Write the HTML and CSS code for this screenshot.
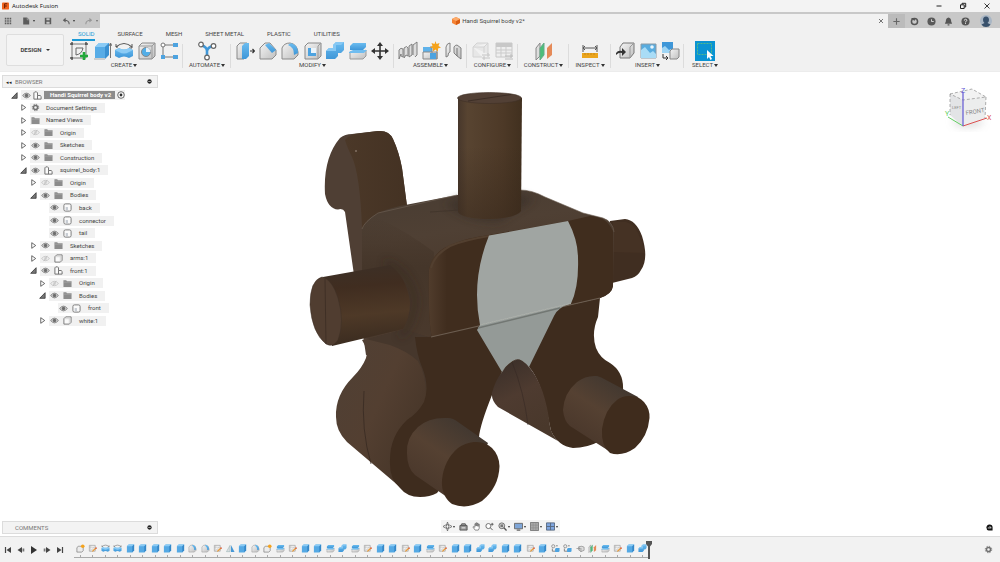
FILE: index.html
```html
<!DOCTYPE html>
<html lang="en">
<head>
<meta charset="utf-8">
<title>Autodesk Fusion</title>
<link rel="stylesheet" href="styles.css">
</head>
<body>
<svg class="defs" aria-hidden="true">
  <defs>
    <linearGradient id="blue" x1="0" y1="0" x2="0" y2="1"><stop offset="0" stop-color="#6bbcf0"/><stop offset="1" stop-color="#3f97d8"/></linearGradient>
    <linearGradient id="grey" x1="0" y1="0" x2="1" y2="1"><stop offset="0" stop-color="#f4f4f4"/><stop offset="1" stop-color="#bfbfbf"/></linearGradient>
  </defs>
  <symbol id="i-sketch" viewBox="0 0 20 20"><path d="M3 3h14v14H3z" fill="none" stroke="#777"/><path d="M1 3h3M3 1v3M16 3h3M17 1v3M1 17h3M3 16v3" stroke="#555" stroke-width="1.500"/><path d="M7 14V7h7q-1 6-7 7z" fill="none" stroke="#666"/><path d="M15 11v8M11 15h8" stroke="#22a83a" stroke-width="2.600"/></symbol>
  <symbol id="i-extrude" viewBox="0 0 20 20"><path d="M3 6l4-4h10v11l-4 4H3z" fill="#58ace6"/><path d="M3 6l4-4h10l-4 4z" fill="#8bcbf5"/><path d="M13 6l4-4v12l-4 4z" fill="#3a91d2"/><path d="M2 18h11" stroke="#aaa"/><path d="M18.500 17V3M17 5l1.500-3L20 5" stroke="#555" stroke-width=".8" fill="none"/></symbol>
  <symbol id="i-textrude" viewBox="0 0 20 20"><path d="M2 5l4-4h12v13l-4 5H2z" fill="#55a9e4"/><path d="M2 5l4-4h12l-4 4z" fill="#8bcbf5"/><path d="M14 5l4-4v13l-4 5z" fill="#3487c8"/></symbol>
  <symbol id="i-revolve" viewBox="0 0 20 20"><path d="M2 6Q10-1 18 6" fill="none" stroke="#555" stroke-width="1.100"/><path d="M18 3v4h-3M2 3v3h2" fill="none" stroke="#555"/><path d="M1 9l4-2q5 3 10 0l4 2v6l-4 2q-5-3-10 0l-4-2z" fill="url(#blue)"/><path d="M1 9l4-2q5 3 10 0l4 2-4 2q-5 3-10 0z" fill="#8bcbf5"/></symbol>
  <symbol id="i-hole" viewBox="0 0 20 20"><path d="M2 5l3-3h13v13l-3 3H2z" fill="url(#grey)" stroke="#888"/><path d="M2 5h13v13M15 5l3-3" fill="none" stroke="#999"/><circle cx="9" cy="11" r="4.500" fill="#52aee8" stroke="#888"/><path d="M9 6.500a4.500 4.500 0 0 1 4.500 4.500H9z" fill="#e5f1fa"/></symbol>
  <symbol id="i-pattern" viewBox="0 0 20 20"><path d="M4 4h12M4 4v12h12" fill="none" stroke="#777"/><circle cx="4" cy="4" r="2" fill="#fff" stroke="#777"/><path d="M14 2h5v4h-5zM2 14h4v4H2zM14 14h5v4h-5z" fill="#4da3e0"/></symbol>
  <symbol id="i-automate" viewBox="0 0 20 20"><path d="M4 4q6 2 6 6v6M10 10q1-4 6-5" fill="none" stroke="#3f97d8" stroke-width="2.600"/><g fill="#fff" stroke="#666" stroke-width="1.200"><circle cx="4" cy="3.500" r="2.300"/><circle cx="16.500" cy="5" r="2.300"/><circle cx="10" cy="16.500" r="2.300"/></g></symbol>
  <symbol id="i-press" viewBox="0 0 20 20"><path d="M2 5l3-3h7v13l-3 3H2z" fill="url(#grey)" stroke="#888"/><path d="M7 5l3-3h4v13l-3 3H7z" fill="url(#blue)"/><path d="M15 10h4M17.500 8l2 2-2 2" fill="none" stroke="#333" stroke-width="1.200"/></symbol>
  <symbol id="i-fillet" viewBox="0 0 20 20"><path d="M2 18V7q2-5 8-5 7 1 8 9v3l-4 4z" fill="url(#grey)" stroke="#8a8a8a"/><path d="M8 4q3-3 5-1 5 2 5 9l-4 2Q14 6 8 4z" fill="url(#blue)"/></symbol>
  <symbol id="i-chamfer" viewBox="0 0 20 20"><path d="M2 18V7l5-5h5l6 7v5l-4 4z" fill="url(#grey)" stroke="#8a8a8a"/><path d="M7 4l4-2 7 7-4 3z" fill="url(#blue)"/></symbol>
  <symbol id="i-shell" viewBox="0 0 20 20"><path d="M2 5l3-3h13v13l-3 3H2z" fill="url(#grey)" stroke="#888"/><path d="M5 7h8v8H5z" fill="#4da3e0"/><path d="M8 7h5v5H8z" fill="#eaf4fb"/><path d="M15 5v13M15 5l3-3" stroke="#999"/></symbol>
  <symbol id="i-combine" viewBox="0 0 20 20"><path d="M1 10l3-3h4V4l3-3h8v8l-3 3h-3v3l-3 3H1z" fill="url(#blue)"/><path d="M1 10l3-3h4V4l3-3h8l-3 3h-5v6z" fill="#86c8f4"/></symbol>
  <symbol id="i-split" viewBox="0 0 20 20"><path d="M2 11h13l3-2v6l-3 3H2z" fill="url(#grey)" stroke="#999"/><path d="M2 5l3-3h13v4l-3 3H2z" fill="url(#blue)"/><path d="M1 11l4-2h14l-3 3H1z" fill="#70bdf0"/></symbol>
  <symbol id="i-move" viewBox="0 0 20 20"><path d="M10 4v12M4 10h12" stroke="#333" stroke-width="1.600"/><path d="M10 1l3 4H7zM10 19l3-4H7zM1 10l4-3v6zM19 10l-4-3v6z" fill="#333"/></symbol>
  <symbol id="i-joints" viewBox="0 0 20 20"><path d="M1 18V9q2-3 4-1v8l-2-1v-2zM6 17V7q3-3 4 0v8l-2-1zM11 16V5l3-2v11zM15 14V4l4-3v13l-2 2" fill="#ddd" stroke="#777" stroke-width=".9"/></symbol>
  <symbol id="i-newcomp" viewBox="0 0 20 20"><path d="M2 6h9v5H2z" fill="#5fb2ea"/><path d="M2 11h14v7H2z" fill="url(#grey)" stroke="#888"/><path d="M9 6h2v12M16 8v10" stroke="#888" fill="none"/><path d="M9 12h6v6H9z" fill="#4da3e0"/><path d="M14.500 0l1 3 3-1-1 3 2.500 1.500-3 1v3l-2.500-2-2.500 2V7l-3-.5L11.500 5l-1-3 3 1z" fill="#f5a31c"/></symbol>
  <symbol id="i-joint" viewBox="0 0 20 20"><path d="M3 16V6q1-4 4-4v9q-2 0-2 4zM11 6q1-2 3-2l4 3v11l-4-3-3-3z" fill="url(#grey)" stroke="#777" stroke-width=".9"/><path d="M14 7v8" stroke="#777"/></symbol>
  <symbol id="i-config" viewBox="0 0 20 20"><path d="M2 6l4-4h11v11M2 6h11l4-4M2 6v10h9M13 6v6" fill="#e7e7e7" stroke="#d3d3d3"/><path d="M11 14h8M11 17h8M17 12v4M13 15v4" stroke="#c4c4c4"/></symbol>
  <symbol id="i-table" viewBox="0 0 20 20"><path d="M2 2h16v14H2z" fill="#eee" stroke="#c8c8c8"/><path d="M2 2h16v4H2z" fill="#c8c8c8"/><path d="M2 9h16M2 12h16M7 6v10M12 6v10" stroke="#cbcbcb"/><path d="M11 15h8M11 18h8M17 13v4" stroke="#bbb"/></symbol>
  <symbol id="i-planes" viewBox="0 0 20 20"><path d="M2 7l4-5v13l-4 4z" fill="#ddd" stroke="#888"/><path d="M6 7l4-5v12l-4 5z" fill="#4bbf7a" stroke="#6a8"/><path d="M13 7l5-5v12l-5 4z" fill="#e58a58"/></symbol>
  <symbol id="i-measure" viewBox="0 0 20 20"><path d="M3 4v7M17 4v7M3 7h14M5 5L3 7l2 2M15 5l2 2-2 2" fill="none" stroke="#555"/><path d="M2 12h16v5H2z" fill="#eba51d"/><path d="M5 12v2M8 12v2M11 12v2M14 12v2" stroke="#c58618"/></symbol>
  <symbol id="i-insert" viewBox="0 0 20 20"><path d="M5 6l3-4h11v10l-4 5H5z" fill="url(#grey)" stroke="#777"/><path d="M15 6v11M15 6l4-4" stroke="#999"/><path d="M1 12q2-3 6-2V7l4 4-4 4v-3q-3-1-6 2z" fill="#333"/></symbol>
  <symbol id="i-image" viewBox="0 0 20 20"><path d="M3 3h15v14H3z" fill="#58acdf" stroke="#8b9aa5"/><path d="M3 16V9l4-3 5 6 3-2 3 3v4H3z" fill="#a9dcf6"/><circle cx="14" cy="6" r="1.800" fill="#e8f7ff"/></symbol>
  <symbol id="i-derive" viewBox="0 0 20 20"><path d="M2 1h11v11H2z" fill="#3f97d8"/><path d="M2 11V7l3-2 4 4 2-1 2 3v1H2z" fill="#9fd5f4"/><path d="M10 10l2-2h7v8l-2 2h-7z" fill="url(#grey)" stroke="#888"/><path d="M3 13v4h5M6 15l2 2-2 2" fill="none" stroke="#333"/></symbol>
  <symbol id="i-select" viewBox="0 0 20 20"><path d="M0 0h20v20H0z" fill="#0a93d2"/><path d="M2.500 2.500h14v11h-14z" fill="none" stroke="#52b88a" stroke-dasharray="2 1"/><path d="M12 9v9l2-2 1.500 3 1.500-1-1.500-3h3z" fill="#fff"/></symbol>
  <symbol id="i-tsketch" viewBox="0 0 20 20"><path d="M3 3h13v13H3z" fill="#f8f8f8" stroke="#9a9a9a" stroke-width="1.500"/><path d="M6 3v13M3 7h13M7 13q5 0 5-6" fill="none" stroke="#aaa"/><path d="M9 18l1-4 7-6 2 2-7 6z" fill="#e79a3a"/><path d="M16 9l2-2 2 2-2 2z" fill="#d4463c"/></symbol>
  <symbol id="i-tnew" viewBox="0 0 20 20"><path d="M2 8q3-4 6-3h8v10l-3 3H2z" fill="#ececec" stroke="#777" stroke-width="1.500"/><circle cx="15" cy="5" r="4" fill="#f5a31c"/></symbol>
  <symbol id="i-mirror" viewBox="0 0 20 20"><path d="M9 3v14H1z" fill="#d9dde0" stroke="#8aa"/><path d="M11 2l8 16h-8z" fill="#4798d6"/></symbol>
  <symbol id="i-link" viewBox="0 0 20 20"><circle cx="5" cy="5" r="3.500" fill="#eee" stroke="#777" stroke-width="1.500"/><path d="M3 10v6h6M11 4h4" fill="none" stroke="#555" stroke-width="1.500"/><path d="M9 11l2-2h8v7l-2 2H9z" fill="#4da3e0"/></symbol>
  <symbol id="i-rigid" viewBox="0 0 20 20"><path d="M6 6v7l5 4 7-3V7l-5-2z" fill="#ddd" stroke="#888" stroke-width="1.500"/><path d="M1 10h8M6 7l3 3-3 3M11 9v8" fill="none" stroke="#888" stroke-width="1.500"/></symbol>

  <symbol id="i-eye" viewBox="0 0 10 8"><path d="M.5 4Q5-1.500 9.500 4 5 9.500.5 4z" fill="#c9c9c9" stroke="#858585"/><circle cx="5" cy="4" r="1.900" fill="#6c6c6c"/></symbol>
  <symbol id="i-eyeoff" viewBox="0 0 10 8"><path d="M.5 4Q5-1 9.500 4 5 9 .5 4zM3 7l4-6" fill="none" stroke="#b9b9b9" stroke-width=".8"/><circle cx="5" cy="4" r="1.300" fill="none" stroke="#bbb" stroke-width=".7"/></symbol>
  <symbol id="i-folder" viewBox="0 0 10 10"><path d="M.5 1.500h3l1 1h5v6.500h-9z" fill="#8c8c8c"/><path d="M.5 3.500h9" stroke="#b5b5b5" stroke-width=".6"/></symbol>
  <symbol id="i-body" viewBox="0 0 10 10"><rect x="1" y="1" width="8" height="8" rx="1.800" fill="#fafafa" stroke="#737373"/><path d="M3 4.500h2.500V8H3z" fill="#c6cbd2"/></symbol>
  <symbol id="i-cube" viewBox="0 0 10 10"><path d="M1 3l2-2h6v6L7 9H1z" fill="#fafafa" stroke="#737373" stroke-linejoin="round"/><path d="M1.500 3H7v5.500M7 3l1.500-1.500" fill="none" stroke="#bbb" stroke-width=".6"/></symbol>
  <symbol id="i-part" viewBox="0 0 10 10"><path d="M1 9V2l1-1h2l1 1v3h3l1 1v3zM5 5v4" fill="#fafafa" stroke="#666" stroke-linejoin="round"/></symbol>
  <symbol id="i-gear" viewBox="0 0 10 10"><circle cx="5" cy="5" r="2.300" fill="none" stroke="#707070" stroke-width="1.700"/><circle cx="5" cy="5" r="3.600" fill="none" stroke="#707070" stroke-width="1" stroke-dasharray="1.500 1.327"/></symbol>
  <symbol id="i-open" viewBox="0 0 8 8"><path d="M7 .8V7.200H.8z" fill="#777" stroke="#333" stroke-width=".9"/></symbol>
  <symbol id="i-closed" viewBox="0 0 8 8"><path d="M2 .8L6.500 4 2 7.200z" fill="#fff" stroke="#444" stroke-width=".9"/></symbol>
  <symbol id="i-dot" viewBox="0 0 6 6"><circle cx="3" cy="3" r="2.600" fill="#222"/><path d="M1.500 3h3" stroke="#ddd" stroke-width=".8"/></symbol>
</svg>

<header class="titlebar">
  <svg class="logo" viewBox="0 0 8 8"><rect width="8" height="8" rx="1" fill="#f0641e"/><path d="M3 1.500v5M3 1.500h3M3 4h2.500" stroke="#6b1d00" stroke-width="1.200"/></svg>
  <h1 class="app-name">Autodesk Fusion</h1>
  <div class="window-buttons">
    <button aria-label="Minimize"><svg viewBox="0 0 8 8"><path d="M1.500 4h5" stroke="#222"/></svg></button>
    <button aria-label="Restore"><svg viewBox="0 0 8 8"><path d="M1.500 2.800h3.700v3.700H1.500zM3 2.500V1.300h3.700V5H5.500" fill="none" stroke="#222"/></svg></button>
    <button aria-label="Close"><svg viewBox="0 0 8 8"><path d="M1.500 1.500l5 5M6.500 1.500l-5 5" stroke="#222" stroke-width=".9"/></svg></button>
  </div>
</header>

<div class="docbar">
  <div class="quick">
    <button aria-label="Data panel"><svg viewBox="0 0 10 10"><path d="M1 1h2v2H1zM4 1h2v2H4zM7 1h2v2H7zM1 4h2v2H1zM4 4h2v2H4zM7 4h2v2H7zM1 7h2v2H1zM4 7h2v2H4zM7 7h2v2H7z" fill="#5c5c5c"/></svg></button>
    <button class="wide" aria-label="File"><svg viewBox="0 0 10 10"><path d="M1.500.5h5l2.500 3v6H1.500z" fill="#5c5c5c"/><path d="M6.500.5v3H9" stroke="#ccc" stroke-width=".6" fill="none"/></svg><i class="caret"></i></button>
    <button aria-label="Save"><svg viewBox="0 0 10 10"><path d="M1 1h8v8H1z" fill="#5c5c5c"/><path d="M3 1.500h4V4H3zM3 6h4v2.500H3z" fill="#c8c8c8"/></svg></button>
    <button class="wide" aria-label="Undo"><svg viewBox="0 0 10 10"><path d="M9 9q0-5-6-5" fill="none" stroke="#5c5c5c" stroke-width="1.300"/><path d="M4.500 1L1 4l3.500 3z" fill="#5c5c5c"/></svg><i class="caret"></i></button>
    <button class="wide faded" aria-label="Redo"><svg viewBox="0 0 10 10"><path d="M1 9q0-5 6-5" fill="none" stroke="#777" stroke-width="1.300"/><path d="M5.500 1L9 4 5.500 7z" fill="#777"/></svg><i class="caret"></i></button>
  </div>
  <div class="doctab">
    <span class="doctitle"><svg viewBox="0 0 8 8"><path d="M4 0l4 2v4L4 8 0 6V2z" fill="#f58233"/><path d="M4 4l4-2v4L4 8z" fill="#d95d12"/><path d="M4 0l4 2-4 2-4-2z" fill="#fbab6c"/></svg>Handi Squirrel body v2*</span>
    <button aria-label="Close document"><svg viewBox="0 0 8 8"><path d="M2 2l4 4M6 2L2 6" stroke="#555" stroke-width=".8"/></svg></button>
  </div>
  <div class="account">
    <button class="add" aria-label="New tab"><svg viewBox="0 0 10 10"><path d="M5 1.500v7M1.500 5h7" stroke="#666" stroke-width="1.200"/></svg></button>
    <button aria-label="Extensions"><svg viewBox="0 0 10 10"><circle cx="5" cy="5" r="3.400" fill="none" stroke="#555" stroke-width="1.700"/><path d="M1 1l4 3.500L6 1z" fill="#555"/></svg></button>
    <button aria-label="Job status"><svg viewBox="0 0 10 10"><circle cx="5" cy="5" r="4.500" fill="#5a5a5a"/><path d="M5 2.500V5h2.500" fill="none" stroke="#ddd"/></svg></button>
    <button aria-label="Notifications"><svg viewBox="0 0 10 10"><path d="M5 .5Q8 1 8 5l1 2.500H1L2 5Q2 1 5 .5zM4 8h2v1.500H4z" fill="#555"/></svg></button>
    <button aria-label="Help"><svg viewBox="0 0 10 10"><circle cx="5" cy="5" r="4.500" fill="#555"/><path d="M3.700 4q0-1.500 1.400-1.500T6.400 4Q6.400 4.700 5 5.300V6M5 6.800v1" fill="none" stroke="#eee"/></svg></button>
    <button class="avatar" aria-label="Profile"><svg viewBox="0 0 12 12"><circle cx="6" cy="6" r="6" fill="#a9b6c4"/><path d="M3 5Q3 1.500 6 1.500T9 5Q9 7 7.500 8l3 1.500Q9 12 6 12T1.500 9.500l3-1.500Q3 7 3 5z" fill="#38506b"/></svg></button>
  </div>
</div>

<section class="ribbon">
  <button class="workspace">DESIGN<i class="caret"></i></button>
  <div class="ribbon-main">
    <nav class="tabs">
      <button class="tab active">SOLID</button>
      <button class="tab">SURFACE</button>
      <button class="tab">MESH</button>
      <button class="tab">SHEET METAL</button>
      <button class="tab">PLASTIC</button>
      <button class="tab">UTILITIES</button>
    </nav>
    <div class="groups">
      <div class="group g-create"><div class="tools">
        <button aria-label="Create sketch"><svg><use href="#i-sketch"/></svg></button><button aria-label="Extrude"><svg><use href="#i-extrude"/></svg></button><button aria-label="Revolve"><svg><use href="#i-revolve"/></svg></button><button aria-label="Hole"><svg><use href="#i-hole"/></svg></button><button aria-label="Pattern"><svg><use href="#i-pattern"/></svg></button></div>
        <button class="menu">CREATE<i class="caret"></i></button></div>
      <div class="group g-automate"><div class="tools"><button aria-label="Automated modeling"><svg><use href="#i-automate"/></svg></button></div><button class="menu">AUTOMATE<i class="caret"></i></button></div>
      <div class="group g-modify"><div class="tools">
        <button aria-label="Press pull"><svg><use href="#i-press"/></svg></button><button aria-label="Chamfer"><svg><use href="#i-chamfer"/></svg></button><button aria-label="Fillet"><svg><use href="#i-fillet"/></svg></button><button aria-label="Shell"><svg><use href="#i-shell"/></svg></button><button aria-label="Combine"><svg><use href="#i-combine"/></svg></button><button aria-label="Split body"><svg><use href="#i-split"/></svg></button><button aria-label="Move"><svg><use href="#i-move"/></svg></button></div>
        <button class="menu">MODIFY<i class="caret"></i></button></div>
      <div class="group g-three"><div class="tools"><button aria-label="Joint origins"><svg><use href="#i-joints"/></svg></button><button aria-label="New component"><svg><use href="#i-newcomp"/></svg></button><button aria-label="Joint"><svg><use href="#i-joint"/></svg></button></div><button class="menu">ASSEMBLE<i class="caret"></i></button></div>
      <div class="group g-two"><div class="tools"><button aria-label="Configure"><svg><use href="#i-config"/></svg></button><button aria-label="Configuration table"><svg><use href="#i-table"/></svg></button></div><button class="menu">CONFIGURE<i class="caret"></i></button></div>
      <div class="group g-two"><div class="tools"><button aria-label="Offset plane"><svg><use href="#i-planes"/></svg></button></div><button class="menu">CONSTRUCT<i class="caret"></i></button></div>
      <div class="group g-one"><div class="tools"><button aria-label="Measure"><svg><use href="#i-measure"/></svg></button></div><button class="menu">INSPECT<i class="caret"></i></button></div>
      <div class="group g-three"><div class="tools"><button aria-label="Insert derive"><svg><use href="#i-insert"/></svg></button><button aria-label="Decal"><svg><use href="#i-image"/></svg></button><button aria-label="Canvas"><svg><use href="#i-derive"/></svg></button></div><button class="menu">INSERT<i class="caret"></i></button></div>
      <div class="group g-one last"><div class="tools"><button aria-label="Select"><svg><use href="#i-select"/></svg></button></div><button class="menu">SELECT<i class="caret"></i></button></div>
    </div>
  </div>
</section>

<main class="viewport">
  <svg class="scene" viewBox="0 72 1000 464" role="img" aria-label="Squirrel body model">
    <defs>
      <linearGradient id="neck" x1="0" x2="1"><stop offset="0" stop-color="#47372b"/><stop offset=".15" stop-color="#584431"/><stop offset=".7" stop-color="#4d3927"/><stop offset="1" stop-color="#41301f"/></linearGradient>
      <linearGradient id="neckshade" x1="0" x2="0" y1="0" y2="1"><stop offset=".4" stop-color="#36271b" stop-opacity="0"/><stop offset="1" stop-color="#36271b" stop-opacity=".5"/></linearGradient>
      <linearGradient id="top" x1="0" x2=".3" y1="0" y2="1"><stop offset="0" stop-color="#483c32"/><stop offset=".35" stop-color="#4f4034"/><stop offset=".7" stop-color="#4a392c"/><stop offset="1" stop-color="#43301f"/></linearGradient>
      <linearGradient id="side" x1="0" x2="0" y1="0" y2="1"><stop offset="0" stop-color="#45362a" stop-opacity="0"/><stop offset=".35" stop-color="#45362a"/><stop offset="1" stop-color="#4b3a2d"/></linearGradient>
      <linearGradient id="leg" x1="0" x2="1" y1="0" y2=".7"><stop offset="0" stop-color="#4f4035"/><stop offset=".5" stop-color="#533f31"/><stop offset="1" stop-color="#433326"/></linearGradient>
      <linearGradient id="peg" x1=".25" x2=".75" y1=".9" y2=".1"><stop offset="0" stop-color="#48362a"/><stop offset=".55" stop-color="#554132"/><stop offset="1" stop-color="#423830"/></linearGradient>
      <linearGradient id="arm" x1="0" x2=".1" y1="0" y2="1"><stop offset="0" stop-color="#3c3027"/><stop offset=".3" stop-color="#402d20"/><stop offset=".65" stop-color="#4e3927"/><stop offset="1" stop-color="#3b2c20"/></linearGradient>
      <linearGradient id="inner" x1="0" x2=".4" y1="0" y2="1"><stop offset="0" stop-color="#372d28"/><stop offset=".5" stop-color="#4e3b30"/><stop offset="1" stop-color="#49382b"/></linearGradient>
      <linearGradient id="tailface" x1="0" x2="1"><stop offset="0" stop-color="#4b3828"/><stop offset="1" stop-color="#443223"/></linearGradient>
      <linearGradient id="edge" x1="0" x2="1"><stop offset="0" stop-color="#503c2c"/><stop offset="1" stop-color="#402d1e"/></linearGradient>
      <filter id="soft" x="-50%" y="-50%" width="200%" height="200%"><feGaussianBlur stdDeviation="4"/></filter>
    </defs>
    <path d="M366 355L353 268 345 212Q343 208 338 209.500 328 209 325 194 323 158 340 138 345 134 352 134L378 131Q389 130 393 139 399 152 402 168L407 206 420 350z" fill="#4f3f34"/>
    <path d="M345 140Q350 134 358 133.500L378 131Q389 130 393 139 399 152 402 168L407 206 362 228Q360 175 352 157 347 147 345 140z" fill="url(#tailface)"/>
    <circle cx="356" cy="151" r=".8" fill="#aa9c90"/>
    <path d="M610 221L625 219Q636 220 642 236 649 259 641 270 638 276 632 278L608 284z" fill="#402e21"/>
    <path d="M613 222h13q8 2 12 11 5 10 7 20l-32-1z" fill="#453224"/>
    <path d="M362 232Q362 222 378 213 384 210 400 206L457 195 520 190Q532 190 545 197L583 213 603 218Q613 221 614 232L613 286Q612 294 600 298L429 337 415 335 362 300z" fill="url(#top)"/>
    <path d="M470 194Q500 188 535 199L500 222Q470 224 445 204z" fill="#2f2720" opacity=".45" filter="url(#soft)"/>
    <path d="M430 212L520 206" stroke="#3c3029" stroke-width=".6"/>
    <path d="M362 229Q366 220 376 217 408 232 434 252L432 337 415 362 362 335z" fill="url(#side)"/>
    <path d="M362 340Q369 351 366 358 362 368 353 377 335 395 336 417 336 431 347 442L400 487Q420 485 438 440L432 337 402 329z" fill="url(#leg)"/>
    <path d="M366 339L404 329 430 337 426 395Q426 374 418 361 407 351 390 345z" fill="#46372c"/>
    <path d="M364 391Q361 430 371 464" fill="none" stroke="#33271f" stroke-width=".7"/>
    <path d="M429 337L600 298 598 317Q591 333 596 348 600 358 610 363 624 372 623 390L600 441Q587 448 573 448 558 446 551 431L548 417Q541 380 529 367L517 359 502 372 492 395Q480 425 479 437L437 493Q430 497 420 497 407 497 400 488 389 479 390 460 390 436 407 420 418 413 424 402 430 387 422 367 417 355 415 337z" fill="#3e2c1e"/>
    <path d="M517 359Q507 365 502 372 495 381 492 393 491 400 498 407L558 441Q551 434 550 426 545 385 529 367 523 360 517 359z" fill="url(#inner)"/>
    <path d="M512 362Q524 392 528 425" fill="none" stroke="#352923" stroke-width=".6"/>
    <path d="M432 337Q428 322 429 270 432 252 453 244 467 238 489 235L568 221 590 216Q606 216 613 231L613 286Q612 294 600 298z" fill="#402d1e"/>
    <path d="M432 337Q428 322 429 270 432 254 446 247L447 333z" fill="url(#edge)"/>
    <path d="M431 268Q435 254 450 246 464 240 489 236" fill="none" stroke="#523f2f" stroke-width="2"/>
    <path d="M431 337L600 298" stroke="#6b5d50" stroke-width="1.200"/>
    <path d="M362 229Q364 222 378 213L457 195M520 190Q532 190 545 197L583 213 603 218Q613 222 614 232" fill="none" stroke="#6f6256" stroke-width=".6"/>
    <path d="M489 235.500L568 221Q578 240 578 258 579 287 571 303.500L480 325Q471 280 489 235.500z" fill="#a0a5a2"/>
    <path d="M480 325L571 303.500Q558 307 554 316L529 367Q522 359 517 359 508 362 502 372L477 330z" fill="#949a97"/>
    <path d="M478 328L560 308" stroke="#727773" stroke-width="1.500"/>
    <path d="M480 325L571 303.500" stroke="#b7bcb8" stroke-width=".8"/>
    <path d="M458 98V212Q462 219 490 219 516 218 521 211L522 98z" fill="url(#neck)"/>
    <path d="M458 98V212Q462 219 490 219 516 218 521 211L522 98z" fill="url(#neckshade)"/>
    <ellipse cx="489.500" cy="98" rx="32" ry="5.500" fill="#524035" stroke="#403127" stroke-width=".6"/>
    <path d="M468 101L511 94.500" stroke="#33271f" stroke-width=".7"/>
    <path d="M385 262Q410 272 415 300 413 325 400 336" fill="none" stroke="#2e241c" stroke-width="5" opacity=".5" filter="url(#soft)"/>
    <path d="M323 277L390 265Q406 276 410 302 410 318 403 329L332 346z" fill="url(#arm)"/>
    <path d="M322 277Q332 279 338 298 345 322 338 340 333 348 326 344 312 333 310 305 310 280 322 277z" fill="#503d30" stroke="#3c2e24" stroke-width=".5"/>
    <path d="M325 279L326 344" stroke="#382a21" stroke-width=".7"/>
    <path d="M407 453Q406 438 418 427 429 417 448 418 453 418 458 422L488 443 460 506 415 475Q407 468 407 453z" fill="url(#peg)"/>
    <path d="M474 442Q485 441 492 448 499 455 499.500 466 499 487 482 501 467 510 452 504 441 496 442 480 444 460 458 448 465 443 474 442z" fill="#3f2c1d"/>
    <path d="M563 410Q564 393 577 382 586 375 597 376 601 377 606 380L638 397 612 453 570 426Q564 421 563 410z" fill="url(#peg)"/>
    <path d="M629 396Q638 395 644 402 650 409 649.500 418 648 436 635 448 622 457 610 453 601 446 602 429 605 409 617 400 622 396 629 396z" fill="#3f2c1d"/>

    <g class="viewcube">
      <ellipse cx="968" cy="122" rx="15" ry="5" fill="#999" opacity=".35" filter="url(#soft)"/>
      <path d="M950 94L972 89 986 97 963 100z" fill="#f2f2f2"/>
      <path d="M950 94L963 100V126L950 115z" fill="#e3e4e6"/>
      <path d="M963 100L986 97 985 118 963 126z" fill="#eceded"/>
      <path d="M950 94L972 89 986 97 963 100zM950 94V115M986 97L985 118" fill="none" stroke="#8c8c8c" stroke-width=".7" stroke-dasharray="3 2"/>
      <path d="M963 126L948 117" stroke="#63cf63"/>
      <path d="M963 126L987 118" stroke="#dc5050"/>
      <path d="M963 126V92" stroke="#6258d4" stroke-width="1.200"/>
      <text x="966" y="115" class="face" transform="rotate(-9 966 115)">FRONT</text>
      <text x="952" y="109" class="face left">LEFT</text>
      <text x="961" y="93" class="axis z">Z</text>
      <text x="945" y="116" class="axis y">Y</text>
      <text x="987" y="120" class="axis x">X</text>
    </g>
  </svg>

  <aside class="browser">
    <div class="panel-head"><span class="chev">◂◂</span><span class="panel-name">BROWSER</span><button aria-label="Browser options"><svg><use href="#i-dot"/></svg></button></div>
    <ul class="tree">
      <li class="l0"><button class="tw" aria-label="Collapse"><svg><use href="#i-open"/></svg></button><span class="item"><svg class="eye"><use href="#i-eye"/></svg><svg class="ic"><use href="#i-part"/></svg><b class="picked">Handi Squirrel body v2</b><svg class="radio" viewBox="0 0 8 8"><circle cx="4" cy="4" r="3.300" fill="#fff" stroke="#444" stroke-width=".8"/><circle cx="4" cy="4" r="1.400" fill="#333"/></svg></span></li>
      <li class="l1"><button class="tw" aria-label="Expand"><svg><use href="#i-closed"/></svg></button><span class="item noeye"><svg class="ic"><use href="#i-gear"/></svg><span class="name">Document Settings</span></span></li>
      <li class="l1"><button class="tw" aria-label="Expand"><svg><use href="#i-closed"/></svg></button><span class="item noeye"><svg class="ic"><use href="#i-folder"/></svg><span class="name">Named Views</span></span></li>
      <li class="l1"><button class="tw" aria-label="Expand"><svg><use href="#i-closed"/></svg></button><span class="item"><svg class="eye"><use href="#i-eyeoff"/></svg><svg class="ic"><use href="#i-folder"/></svg><span class="name">Origin</span></span></li>
      <li class="l1"><button class="tw" aria-label="Expand"><svg><use href="#i-closed"/></svg></button><span class="item"><svg class="eye"><use href="#i-eye"/></svg><svg class="ic"><use href="#i-folder"/></svg><span class="name">Sketches</span></span></li>
      <li class="l1"><button class="tw" aria-label="Expand"><svg><use href="#i-closed"/></svg></button><span class="item"><svg class="eye"><use href="#i-eye"/></svg><svg class="ic"><use href="#i-folder"/></svg><span class="name">Construction</span></span></li>
      <li class="l1"><button class="tw" aria-label="Collapse"><svg><use href="#i-open"/></svg></button><span class="item"><svg class="eye"><use href="#i-eye"/></svg><svg class="ic"><use href="#i-part"/></svg><span class="name">squirrel_body:1</span></span></li>
      <li class="l2"><button class="tw" aria-label="Expand"><svg><use href="#i-closed"/></svg></button><span class="item"><svg class="eye"><use href="#i-eyeoff"/></svg><svg class="ic"><use href="#i-folder"/></svg><span class="name">Origin</span></span></li>
      <li class="l2"><button class="tw" aria-label="Collapse"><svg><use href="#i-open"/></svg></button><span class="item"><svg class="eye"><use href="#i-eye"/></svg><svg class="ic"><use href="#i-folder"/></svg><span class="name">Bodies</span></span></li>
      <li class="l3"><span class="tw"></span><span class="item"><svg class="eye"><use href="#i-eye"/></svg><svg class="ic"><use href="#i-body"/></svg><span class="name">back</span></span></li>
      <li class="l3"><span class="tw"></span><span class="item"><svg class="eye"><use href="#i-eye"/></svg><svg class="ic"><use href="#i-body"/></svg><span class="name">connector</span></span></li>
      <li class="l3"><span class="tw"></span><span class="item"><svg class="eye"><use href="#i-eye"/></svg><svg class="ic"><use href="#i-body"/></svg><span class="name">tail</span></span></li>
      <li class="l2"><button class="tw" aria-label="Expand"><svg><use href="#i-closed"/></svg></button><span class="item"><svg class="eye"><use href="#i-eye"/></svg><svg class="ic"><use href="#i-folder"/></svg><span class="name">Sketches</span></span></li>
      <li class="l2"><button class="tw" aria-label="Expand"><svg><use href="#i-closed"/></svg></button><span class="item"><svg class="eye"><use href="#i-eyeoff"/></svg><svg class="ic"><use href="#i-cube"/></svg><span class="name">arms:1</span></span></li>
      <li class="l2"><button class="tw" aria-label="Collapse"><svg><use href="#i-open"/></svg></button><span class="item"><svg class="eye"><use href="#i-eye"/></svg><svg class="ic"><use href="#i-part"/></svg><span class="name">front:1</span></span></li>
      <li class="l3"><button class="tw" aria-label="Expand"><svg><use href="#i-closed"/></svg></button><span class="item"><svg class="eye"><use href="#i-eyeoff"/></svg><svg class="ic"><use href="#i-folder"/></svg><span class="name">Origin</span></span></li>
      <li class="l3"><button class="tw" aria-label="Collapse"><svg><use href="#i-open"/></svg></button><span class="item"><svg class="eye"><use href="#i-eye"/></svg><svg class="ic"><use href="#i-folder"/></svg><span class="name">Bodies</span></span></li>
      <li class="l4"><span class="tw"></span><span class="item"><svg class="eye"><use href="#i-eye"/></svg><svg class="ic"><use href="#i-body"/></svg><span class="name">front</span></span></li>
      <li class="l3"><button class="tw" aria-label="Expand"><svg><use href="#i-closed"/></svg></button><span class="item"><svg class="eye"><use href="#i-eye"/></svg><svg class="ic"><use href="#i-cube"/></svg><span class="name">white:1</span></span></li>
    </ul>
  </aside>

  <aside class="comments panel-head"><span class="chev"></span><span class="panel-name">COMMENTS</span><button aria-label="Comment options"><svg><use href="#i-dot"/></svg></button></aside>

  <div class="navbar">
    <button aria-label="Orbit"><svg viewBox="0 0 10 10"><path d="M0 5q5-4 10 0-5 4-10 0zM5 0q-3 5 0 10 3-5 0-10z" fill="none" stroke="#666" stroke-width=".9"/></svg><i class="caret"></i></button>
    <button aria-label="Look at"><svg viewBox="0 0 10 10"><path d="M1 4h8v5H1zM2 4l1-2h4l1 2" fill="#999" stroke="#555"/><path d="M3 6.500h4" stroke="#eee"/></svg></button>
    <button aria-label="Pan"><svg viewBox="0 0 10 10"><path d="M3.500 9L1 5.500l1-.5 1.200 1V2h1.200v2.500V1h1.200v3.500V1.500h1.200V5l.2-2.500H8.200L8 7 7 9z" fill="#fff" stroke="#555" stroke-width=".7"/></svg></button>
    <button aria-label="Zoom"><svg viewBox="0 0 10 10"><circle cx="3.800" cy="4.500" r="2.800" fill="#fff" stroke="#666"/><path d="M6 6.500l2.500 2.500M8 1v3M6.500 2.500h3" stroke="#555"/></svg></button>
    <button aria-label="Fit"><svg viewBox="0 0 10 10"><circle cx="4.200" cy="4.200" r="3.200" fill="#ddd" stroke="#666"/><path d="M2.700 2.700h3v3h-3z" fill="#777"/><path d="M6.500 6.500L9.500 9.500" stroke="#555" stroke-width="1.500"/></svg><i class="caret"></i></button>
    <button aria-label="Display settings"><svg viewBox="0 0 10 10"><path d="M.5 1.500h9v6h-9z" fill="#7fa6d8" stroke="#666"/><path d="M3 9h4" stroke="#555" stroke-width="1.300"/></svg><i class="caret"></i></button>
    <button aria-label="Grid settings"><svg viewBox="0 0 10 10"><path d="M.5.5h9v9h-9z" fill="#aaa" stroke="#777"/><path d="M.5 3.500h9M.5 6.500h9M3.500.5v9M6.500.5v9" stroke="#888" stroke-width=".6"/></svg><i class="caret"></i></button>
    <button aria-label="Viewports"><svg viewBox="0 0 10 10"><path d="M.5 1h9v8h-9z" fill="#7fa6e0" stroke="#55657c"/><path d="M5 1v8M.5 5h9" stroke="#55657c"/></svg><i class="caret"></i></button>
  </div>

  <button class="assist" aria-label="Assistant"><svg viewBox="0 0 8 8"><path d="M4 .5q3.500 0 3.500 3.500v3.500H3Q.5 7 .5 4T4 .5z" fill="#111"/><path d="M2 4.500h4M4 3l2 1" stroke="#fff" stroke-width=".9"/></svg></button>
</main>

<footer class="timeline">
  <div class="play">
    <button aria-label="Go to start"><svg viewBox="0 0 8 8"><path d="M1.500 1v6" stroke="#444" stroke-width="1.200"/><path d="M7 1v6L2.500 4z" fill="#444"/></svg></button>
    <button aria-label="Step back"><svg viewBox="0 0 8 8"><path d="M5 1v6L.5 4z" fill="#444"/><path d="M5.500 2.500h1.800v3H5.500z" fill="#777"/></svg></button>
    <button aria-label="Play"><svg viewBox="0 0 8 8"><path d="M1 0v8l6-4z" fill="#333"/></svg></button>
    <button aria-label="Step forward"><svg viewBox="0 0 8 8"><path d="M3 1v6l4.500-3z" fill="#444"/><path d="M.7 2.500h1.800v3H.7z" fill="#777"/></svg></button>
    <button aria-label="Go to end"><svg viewBox="0 0 8 8"><path d="M6.500 1v6" stroke="#444" stroke-width="1.200"/><path d="M1 1v6l4.500-3z" fill="#444"/></svg></button>
  </div>
  <ol class="track">
    <li><svg><use href="#i-tnew"/></svg></li><li><svg><use href="#i-tsketch"/></svg></li><li><svg><use href="#i-revolve"/></svg></li><li><svg><use href="#i-revolve"/></svg></li>
    <li><svg><use href="#i-textrude"/></svg></li><li><svg><use href="#i-textrude"/></svg></li><li><svg><use href="#i-textrude"/></svg></li><li><svg><use href="#i-textrude"/></svg></li><li><svg><use href="#i-textrude"/></svg></li>
    <li><svg><use href="#i-fillet"/></svg></li><li><svg><use href="#i-fillet"/></svg></li><li><svg><use href="#i-tsketch"/></svg></li><li><svg><use href="#i-mirror"/></svg></li><li><svg><use href="#i-textrude"/></svg></li>
    <li><svg><use href="#i-fillet"/></svg></li><li><svg><use href="#i-tnew"/></svg></li><li><svg><use href="#i-split"/></svg></li><li><svg><use href="#i-tsketch"/></svg></li><li><svg><use href="#i-textrude"/></svg></li><li><svg><use href="#i-textrude"/></svg></li>
    <li><svg><use href="#i-split"/></svg></li><li><svg><use href="#i-combine"/></svg></li><li><svg><use href="#i-split"/></svg></li><li><svg><use href="#i-tsketch"/></svg></li><li><svg><use href="#i-textrude"/></svg></li><li><svg><use href="#i-textrude"/></svg></li>
    <li><svg><use href="#i-tsketch"/></svg></li><li><svg><use href="#i-textrude"/></svg></li><li><svg><use href="#i-split"/></svg></li><li><svg><use href="#i-tsketch"/></svg></li><li><svg><use href="#i-textrude"/></svg></li><li><svg><use href="#i-textrude"/></svg></li>
    <li><svg><use href="#i-combine"/></svg></li><li><svg><use href="#i-combine"/></svg></li><li><svg><use href="#i-textrude"/></svg></li><li><svg><use href="#i-textrude"/></svg></li><li><svg><use href="#i-tsketch"/></svg></li><li><svg><use href="#i-textrude"/></svg></li>
    <li><svg><use href="#i-link"/></svg></li><li><svg><use href="#i-link"/></svg></li><li><svg><use href="#i-rigid"/></svg></li><li><svg><use href="#i-planes"/></svg></li><li><svg><use href="#i-split"/></svg></li><li><svg><use href="#i-tsketch"/></svg></li>
    <li><svg><use href="#i-textrude"/></svg></li><li><svg><use href="#i-combine"/></svg></li>
  </ol>
  <svg class="marker" viewBox="0 0 6 18"><path d="M0 0h6v3L4 5.500V18H2V5.500L0 3z" fill="#555"/></svg>
  <button class="settings" aria-label="Timeline settings"><svg><use href="#i-gear"/></svg></button>
</footer>
</body>
</html>
```
FILE: styles.css
```css
* { box-sizing: border-box; }

body {
  margin: 0;
  height: 100vh;
  display: flex;
  flex-direction: column;
  overflow: hidden;
  background: #fff;
  color: #444;
  font: 6px/8px Roboto, "Liberation Sans", sans-serif;
}

button {
  display: flex;
  align-items: center;
  justify-content: center;
  margin: 0;
  padding: 0;
  border: 0;
  background: none;
  color: inherit;
  font: inherit;
}

svg { display: block; flex: none; }
ul, ol { margin: 0; padding: 0; list-style: none; }
.defs { position: absolute; width: 0; height: 0; }

.caret {
  flex: none;
  margin-left: 1px;
  border: 2px solid transparent;
  border-top: 3px solid #333;
  border-bottom: 0;
}

/* Title bar */
.titlebar {
  display: flex;
  align-items: center;
  gap: 3px;
  height: 12px;
  padding: 0 9px 0 2px;
  background: #f3f3f3;
}
.logo { width: 7px; height: 8px; }
.app-name {
  margin: 0;
  color: #111;
  font: 6px/8px "Open Sans", "Noto Sans", sans-serif;
}
.window-buttons { display: flex; gap: 16px; margin-left: auto; }
.window-buttons svg { width: 8px; height: 8px; }

/* Document bar */
.docbar {
  display: flex;
  height: 16px;
  border-top: 2px solid #c8c8c8;
  background: #c8c8c8;
}
.quick {
  display: flex;
  align-items: center;
  gap: 9px;
  width: 100px;
  padding-left: 4px;
}
.quick svg { width: 8px; height: 8px; }
.quick .wide { width: 14px; }
.quick .caret { margin-left: 3px; border-width: 2px 1px 0; }
.faded { opacity: .6; }
.doctab {
  display: flex;
  flex: 1;
  align-items: center;
  padding-right: 3px;
  background: #f1f1f1;
}
.doctitle {
  display: flex;
  flex: 1;
  align-items: center;
  justify-content: center;
  gap: 2px;
}
.doctab svg { width: 8px; height: 8px; }
.account {
  display: flex;
  align-items: center;
  gap: 8px;
  padding-right: 8px;
}
.account svg { width: 9px; height: 9px; }
.account .add { width: 17px; height: 14px; background: #bbb; }
.account .add + button { margin-left: -3px; }
.account .avatar { margin-left: 2px; }
.account .avatar svg { width: 12px; height: 12px; }

/* Ribbon */
.ribbon {
  display: flex;
  height: 44px;
  border-bottom: 1px solid #ececec;
  background: #f1f1f1;
}
.workspace {
  width: 58px;
  height: 32px;
  margin: 6px 1px 0 6px;
  border: 1px solid #dedede;
  border-radius: 2px;
  background: #f4f4f4;
  font-weight: 700;
}
.workspace .caret { margin-left: 4px; border-width: 2px 2px 0; }
.ribbon-main { flex: 1; }
.tabs { display: flex; gap: 17px; height: 13px; padding-left: 7px; }
.tab { padding-left: 6px; border-bottom: 2px solid transparent; }
.tab.active { border-color: #1c9ad6; color: #1c9ad6; }
.groups { display: flex; }
.group {
  display: flex;
  flex-direction: column;
  padding: 0 4px;
}
.group:not(.last) {
  background: linear-gradient(#dcdcdc, #dcdcdc) right 3px / 1px 24px no-repeat;
}
.tools { display: flex; justify-content: space-between; height: 20px; }
.tools button:only-child { margin: 0 auto; }
.tools svg { width: 20px; height: 20px; }
.menu { margin: 0 -4px; }
.g-create { width: 118px; }
.g-automate { width: 48px; }
.g-modify { width: 163px; }
.g-three { width: 73px; }
.g-two { width: 51px; }
.g-one { width: 42px; }

/* Viewport: layers share one grid cell */
.viewport {
  display: grid;
  grid-template: minmax(0, 1fr) / minmax(0, 1fr);
  flex: 1;
  min-height: 0;
}
.viewport > * { grid-area: 1 / 1; align-self: end; justify-self: start; }
.viewport .scene { width: 100%; height: 100%; }
.face { fill: #888; font-size: 6px; }
.left { font-size: 4px; }
.axis { font-size: 7px; }
.z { fill: #6258d4; }
.y { fill: #63cf63; }
.x { fill: #dc5050; }

.panel-head {
  display: flex;
  align-items: center;
  width: 156px;
  height: 13px;
  padding: 0 5px 0 3px;
  border: 1px solid #dcdcdc;
  background: #f3f3f3;
  color: #777;
}
.chev { width: 9px; color: #222; font-size: 5px; }
.panel-name { flex: 1; }
.panel-head svg { width: 5px; height: 5px; }

.viewport .browser { align-self: start; padding: 3px 0 0 2px; }
.tree {
  display: grid;
  grid-auto-rows: 1fr;
  height: 238px;
  margin-top: 1px;
}
.tree li { display: flex; align-items: center; min-height: 0; }
.l0 { padding-left: 8px; }
.l1 { padding-left: 17px; }
.l2 { padding-left: 27px; }
.l3 { padding-left: 36px; }
.l4 { padding-left: 45px; }
.tw { width: 8px; }
.tw svg { width: 7px; height: 7px; }
.item {
  display: flex;
  align-items: center;
  gap: 4px;
  height: 10px;
  margin-left: 3px;
  padding: 0 8px 0 1px;
  background: #f1f1f1;
}
.eye { width: 9px; height: 7px; }
.ic { width: 9px; height: 9px; }
.item .name { margin-left: 3px; }
.noeye .name { margin-left: 2px; }
.l0 .item { gap: 2px; padding-right: 0; }
.item .picked {
  padding: 0 4px 0 6px;
  background: #8c8c8c;
  color: #fff;
}
.radio { width: 8px; height: 8px; }

.comments { margin: 0 0 2px 2px; }

.viewport .navbar {
  display: flex;
  justify-self: center;
  gap: 4px;
  margin-bottom: 3px;
  padding: 2px;
  background: #f4f4f4;
}
.navbar svg { width: 9px; height: 9px; }
.navbar .caret { margin-left: 1px; border-width: 2px 1px 0; }
.viewport .assist { justify-self: end; margin: 0 7px 5px; }
.assist svg { width: 7px; height: 7px; }

/* Timeline */
.timeline {
  display: flex;
  height: 26px;
  padding: 0 7px 0 4px;
  border-top: 1px solid #dcdcdc;
  background: #f2f2f2;
}
.play { display: flex; align-items: center; gap: 5px; width: 70px; }
.play svg { width: 8px; height: 8px; }
.track { display: flex; flex: 0 1 575px; }
.track li {
  flex: 1;
  padding-top: 7px;
  background:
    linear-gradient(#aaa, #aaa) 0 20px / 100% 1px no-repeat,
    linear-gradient(#aaa, #aaa) 50% 18px / 1px 2px no-repeat;
}
.track svg { width: 9px; height: 9px; margin: 0 auto; }
.marker { width: 6px; height: 18px; margin-top: 4px; margin-left: -3px; }
.settings { margin-left: auto; }
.settings svg { width: 9px; height: 9px; }
```
